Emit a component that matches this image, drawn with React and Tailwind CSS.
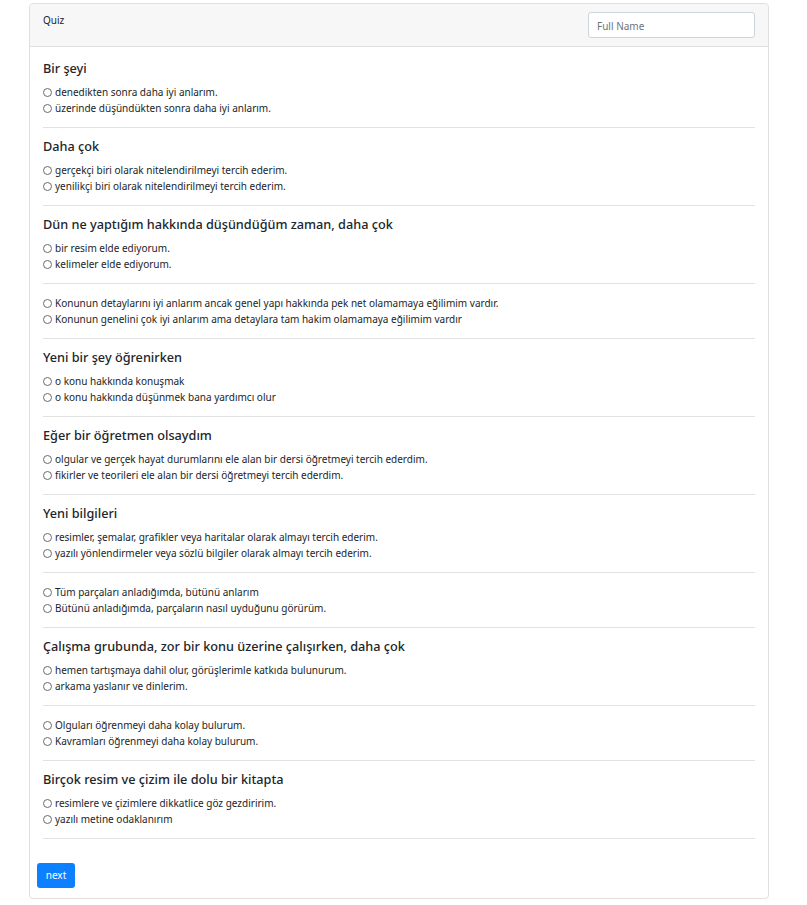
import { useState } from "react";

const questions = [
  {
    title: "Bir şeyi",
    options: ["denedikten sonra daha iyi anlarım.", "üzerinde düşündükten sonra daha iyi anlarım."],
  },
  {
    title: "Daha çok",
    options: [
      "gerçekçi biri olarak nitelendirilmeyi tercih ederim.",
      "yenilikçi biri olarak nitelendirilmeyi tercih ederim.",
    ],
  },
  {
    title: "Dün ne yaptığım hakkında düşündüğüm zaman, daha çok",
    options: ["bir resim elde ediyorum.", "kelimeler elde ediyorum."],
  },
  {
    title: "",
    options: [
      "Konunun detaylarını iyi anlarım ancak genel yapı hakkında pek net olamamaya eğilimim vardır.",
      "Konunun genelini çok iyi anlarım ama detaylara tam hakim olamamaya eğilimim vardır",
    ],
  },
  {
    title: "Yeni bir şey öğrenirken",
    options: ["o konu hakkında konuşmak", "o konu hakkında düşünmek bana yardımcı olur"],
  },
  {
    title: "Eğer bir öğretmen olsaydım",
    options: [
      "olgular ve gerçek hayat durumlarını ele alan bir dersi öğretmeyi tercih ederdim.",
      "fikirler ve teorileri ele alan bir dersi öğretmeyi tercih ederdim.",
    ],
  },
  {
    title: "Yeni bilgileri",
    options: [
      "resimler, şemalar, grafikler veya haritalar olarak almayı tercih ederim.",
      "yazılı yönlendirmeler veya sözlü bilgiler olarak almayı tercih ederim.",
    ],
  },
  {
    title: "",
    options: [
      "Tüm parçaları anladığımda, bütünü anlarım",
      "Bütünü anladığımda, parçaların nasıl uyduğunu görürüm.",
    ],
  },
  {
    title: "Çalışma grubunda, zor bir konu üzerine çalışırken, daha çok",
    options: [
      "hemen tartışmaya dahil olur, görüşlerimle katkıda bulunurum.",
      "arkama yaslanır ve dinlerim.",
    ],
  },
  {
    title: "",
    options: ["Olguları öğrenmeyi daha kolay bulurum.", "Kavramları öğrenmeyi daha kolay bulurum."],
  },
  {
    title: "Birçok resim ve çizim ile dolu bir kitapta",
    options: ["resimlere ve çizimlere dikkatlice göz gezdiririm.", "yazılı metine odaklanırım"],
  },
];

function App() {
  const [answers, setAnswers] = useState({});
  const [name, setName] = useState("");

  return (
    <div className="min-h-screen bg-white pt-[3px] pl-[29px] pr-[38px] pb-[6px] text-[#212529] font-['Noto_Sans',sans-serif]">
      <div className="border border-[#dfdfdf] rounded-[4px]">
        {/* header */}
        <div className="flex justify-between items-start bg-[#f7f7f7] border-b border-[#dfdfdf] px-[13px] py-[8px] rounded-t-[4px]">
          <span className="text-[10px] leading-[16px] mt-0">Quiz</span>
          <input
            value={name}
            onChange={(e) => setName(e.target.value)}
            placeholder="Full Name"
            className="w-[167px] h-[26px] bg-white border border-[#ced4da] rounded-[3px] px-[8px] pt-[2px] text-[10px] placeholder:text-[#6c757d] outline-none"
          />
        </div>

        {/* sorular */}
        <div className="px-[13px] pt-[3px] pb-[10px]">
          {questions.map((q, qi) => (
            <div
              key={qi}
              className={`border-b border-[#e2e2e2] pb-[12px] ${q.title ? "pt-[9px]" : "pt-[10px]"}`}
            >
              {q.title && (
                <h5 className="text-[12.7px] leading-[18px] font-medium mb-[6px] text-[#212529]">{q.title}</h5>
              )}
              {q.options.map((opt, oi) => (
                <label key={oi} className="flex items-center gap-[3px] text-[10px] leading-[16px] pt-[1px] -mb-[1px] cursor-pointer">
                  <input
                    type="radio"
                    name={`q${qi}`}
                    checked={answers[qi] === oi}
                    onChange={() => setAnswers({ ...answers, [qi]: oi })}
                    className="appearance-none w-[9px] h-[9px] rounded-full border border-[#6b6b6b] bg-white checked:border-[3px] checked:border-[#0075ff] m-0"
                  />
                  <span>{opt}</span>
                </label>
              ))}
            </div>
          ))}

          <button className="mt-[24px] -ml-[6px] w-[38px] h-[25px] bg-[#0d80ff] text-white text-[10px] rounded-[3px]">
            next
          </button>
        </div>
      </div>
    </div>
  );
}

export default App;
